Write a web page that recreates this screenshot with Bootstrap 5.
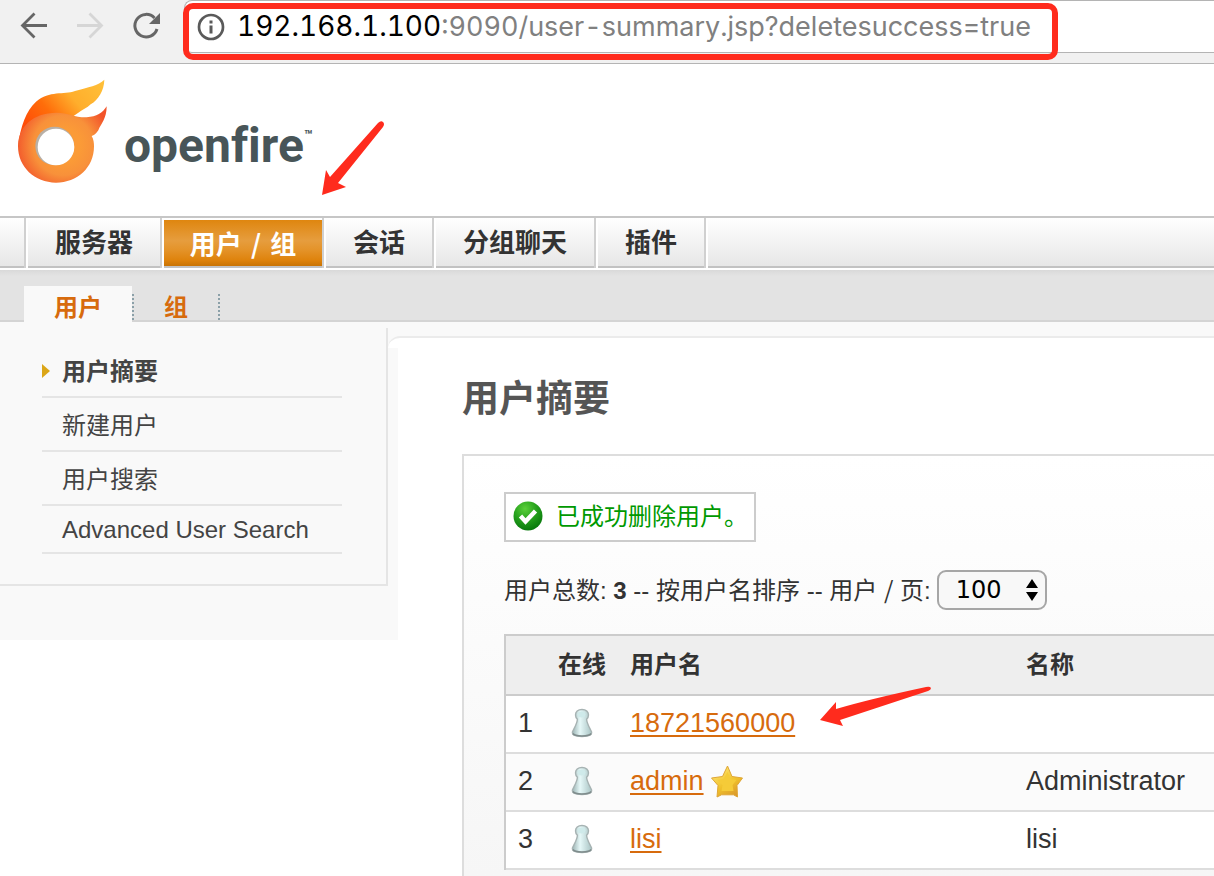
<!DOCTYPE html>
<html lang="zh-CN">
<head>
<meta charset="utf-8">
<meta name="viewport" content="width=device-width, initial-scale=1">
<title>用户摘要 - Openfire</title>
<link href="https://cdn.jsdelivr.net/npm/bootstrap@5.3.0/dist/css/bootstrap.min.css" rel="stylesheet">
<style>
body{font-family:"Liberation Sans","Noto Sans CJK SC",sans-serif;font-size:24px;line-height:36px;color:#333;background:#fff;overflow-x:hidden}
a{color:#d76b0d}
svg{display:block;flex:none}
/* browser toolbar */
.toolbar{height:64px;background:#f1f1f1;border-bottom:1px solid #b4b4b4}
.tool-btn{width:28px;height:28px;margin-right:28px}
.address{height:53px;background:#fff;border:1px solid #b4b4b4;border-right:0;border-radius:8px 0 0 8px;font:27px/36px Inter,sans-serif;font-variant-numeric:tabular-nums;color:#808080;padding-left:12px}
.address b{font-size:28px;font-weight:400;color:#000}
.mark-box{position:absolute;left:183px;top:3px;width:875px;height:57px;border:6px solid #ff2b1d;border-radius:10px;pointer-events:none}
.mark-arrow{position:absolute;fill:#ff2b1d;pointer-events:none}
/* header */
.brand-bar{height:152px;padding:14px 16px}
.brand-name{font:700 48px/56px Roboto,sans-serif;font-variant-ligatures:none;color:#485558;text-decoration:none}
.brand-name sup{font-size:14px;top:-22px}
.main-tabs{height:54px;border-top:2px solid #c6c6c6;border-bottom:2px solid #fff;background:linear-gradient(#fff,#e6e6e6);box-shadow:inset 0 -2px #c2c2c2;padding-left:24px}
.main-tabs a{padding:0 27px;line-height:50px;font-size:26px;font-weight:700;color:#333;text-decoration:none}
.tab-cell{display:flex;border-right:2px solid #fff;box-shadow:inset -2px 0 #d0d0d0;padding-right:2px}
.tab-cell.first-edge{width:4px}
.main-tabs a.current{padding:0;width:158px;text-align:center;color:#fff;line-height:46px;height:46px;margin-top:2px;background:linear-gradient(#df860f,#e69d3e 45%,#e49329 65%,#de820b 88%,#c97405)}
.slash{margin:0 2px;font-family:"Noto Sans CJK SC",sans-serif}
.sub-tabs{height:52px;background:linear-gradient(#d9d9d9,#e3e3e3 6px);border-bottom:2px solid #d4d4d4;padding-left:24px}
.sub-tabs a{font-weight:700;text-decoration:none;line-height:28px;border-right:2px dotted #8ba0a8;height:26px;padding:0 30px}
.sub-tabs a.current{position:relative;background:#f9f9f9;height:36px;line-height:44px;border:0;margin-bottom:-2px}
.sub-tabs .divider{width:2px;height:26px;border-right:2px dotted #8ba0a8}
/* content */
.side-zone{width:388px;height:318px;background:#f9f9f9;padding-top:6px}
.side-panel{height:258px;border:solid #e5e5e5;border-width:0 2px 2px 0;padding:16px 44px 0 42px}
.side-panel a{display:block;position:relative;color:#444;text-decoration:none;padding:10px 0 6px 20px;border-bottom:2px solid #e5e5e5}
.side-panel a:last-child{padding:6px 0 4px 20px}
.side-panel a.current{font-weight:700}
.side-panel a.current::before{content:"";position:absolute;left:0;top:20px;border:solid transparent;border-width:7px 0 7px 8px;border-left-color:#dba617}
.main-zone{min-width:0;background:linear-gradient(#f9f9f9,#f9f9f9) 0 0/100% 26px no-repeat}
.main-sheet{margin-top:14px;border-top:2px solid #ebebeb;border-top-left-radius:12px;padding:34px 0 0 74px;background:linear-gradient(#f9f9f9,#f9f9f9) 0 10px/10px 292px no-repeat #fff}
h1{font-size:37px;line-height:56px;font-weight:700;color:#555;margin:0 0 26px}
.content-box{border:2px solid #ddd;border-width:2px 0 0 2px;background:linear-gradient(#fff,#f6f6f6);padding:36px 0 0 40px}
.notice{border:2px solid #ccc;background:#fff;color:#090;height:50px;width:252px;padding-left:6px;gap:12px;margin-bottom:28px}
.page-size{width:110px;height:40px;border:2px solid #a6a6a6;border-radius:9px;background:#f8f8f8;font:24px/34px "DejaVu Sans",sans-serif;color:#000;padding:0 0 0 17px;appearance:none}
.select-wrap{margin-left:6px}
.select-arrows{position:absolute;right:9px;top:9px;pointer-events:none}
.users{width:100%;margin:24px 0 0;border-left:2px solid #ccc;border-collapse:separate;border-spacing:0;table-layout:fixed}
.users th{height:62px;background:#eee;border:solid #ccc;border-width:2px 0;padding:0}
.users td{height:58px;border-bottom:2px solid #ddd;background:#fff;font-size:27px;padding:0 0 2px;white-space:nowrap}
.users tr:nth-child(even) td{background:#fbfbfb}
.users td:first-child{padding-left:12px}
.users th:nth-child(3),.users td:nth-child(3){padding-left:12px}
.users a{text-underline-offset:3px;text-decoration-thickness:2px}
.name-line{gap:7px}
.c-num{width:40px}.c-on{width:72px}.c-user{width:408px}
.users td:nth-child(2) svg{margin:0 auto}
</style>
</head>
<body class="min-vh-100 d-flex flex-column">
<svg width="0" height="0" class="position-absolute" aria-hidden="true">
<defs>
<linearGradient id="gPawn"><stop offset="0" stop-color="#9cb4b4"/><stop offset=".4" stop-color="#e6f8f8"/><stop offset="1" stop-color="#a9c4c4"/></linearGradient>
<symbol id="pawn" viewBox="0 0 22 30"><path d="M11 1.500c-4.200 0-6.500 2.500-6.500 5.500 0 2 .9 3.300 1.900 4.300C6.200 15.500 3.800 19 1.600 23.500c-1 3.300 1.500 5 9.400 5s10.400-1.700 9.400-5c-2.200-4.500-4.600-8-4.800-12.200 1-1 1.900-2.300 1.900-4.300 0-3-2.300-5.500-6.500-5.500z" fill="url(#gPawn)" stroke="#a7b3b3" stroke-width="1.400"/><path d="M2 25.500c2 3.200 16 3.200 18 0" fill="none" stroke="#7f8c8c" stroke-width="1.500"/><ellipse cx="10.500" cy="6.500" rx="4" ry="3" fill="#cfeaea"/></symbol>
</defs>
</svg>

<div class="toolbar position-relative d-flex flex-none">
  <div class="d-flex pt-2 ps-3 ms-1 mt-1">
    <button class="tool-btn btn p-0 border-0" aria-label="后退"><svg width="28" height="28" fill="none" stroke="#666" stroke-width="2.800"><path d="M27 13.500H3M14.500 1.500l-12 12 12 12"/></svg></button>
    <button class="tool-btn btn p-0 border-0" aria-label="前进"><svg width="28" height="28" fill="none" stroke="#d6d6d6" stroke-width="2.800"><path d="M1 13.500h24M13.500 1.500l12 12-12 12"/></svg></button>
    <button class="tool-btn btn p-0 border-0 me-0" aria-label="刷新"><svg width="28" height="28"><path d="M22.500 6A11.300 11.300 0 1 0 25 17" fill="none" stroke="#666" stroke-width="3"/><path d="M28 1v11H17z" fill="#666"/></svg></button>
  </div>
  <div class="address d-flex flex-fill align-items-center ms-4">
    <svg width="28" height="28" class="me-2 ms-0"><circle cx="14" cy="14" r="12" fill="none" stroke="#5a5a5a" stroke-width="2.700"/><path d="M12.500 12.500h3v8h-3zM12.500 7.500h3v3h-3z" fill="#5a5a5a"/></svg>
    <div class="ms-1" role="textbox" contenteditable="true" aria-label="地址"><b>192.168.1.100</b>:9090/user-summary.jsp?deletesuccess=true</div>
  </div>
  <div class="mark-box"></div>
</div>

<header class="brand-bar position-relative d-flex">
  <svg width="92" height="106" viewBox="48 23 276 318">
    <defs>
      <linearGradient id="gBack" x1="0" y1=".6" x2="1" y2="0"><stop offset="0" stop-color="#ff4c08"/><stop offset=".3" stop-color="#ff6d0a"/><stop offset=".6" stop-color="#ffae2c"/><stop offset="1" stop-color="#ffc13a"/></linearGradient>
      <radialGradient id="gRing" gradientUnits="userSpaceOnUse" cx="190" cy="225" r="145"><stop offset=".35" stop-color="#fb9b37"/><stop offset=".62" stop-color="#f8913a"/><stop offset="1" stop-color="#f2532a"/></radialGradient>
    </defs>
    <path d="M56 215C62 172 78 120 108 94C150 60 190 74 225 62C265 50 295 46 313 28C312 60 296 88 272 102C262 112 245 120 235 127L180 165Z" fill="url(#gBack)"/>
    <path d="M54 228C54 170 98 127 170 127C205 127 225 142 260 141C290 139 308 128 320 108C320 145 304 158 295 180C288 191 282 195 275 197C281 207 282 218 282 228C282 292 232 337 168 337C104 337 54 290 54 228Z" fill="url(#gRing)"/>
    <circle cx="164" cy="227" r="58" fill="#b8b0a7"/><circle cx="168" cy="230" r="55" fill="#fff"/>
  </svg>
  <a class="brand-name ms-3 mt-4 pt-3" href="#">openfire<sup>™</sup></a>
  <svg class="mark-arrow" style="left:322px;top:56px" width="64" height="76"><path d="M0 75L4 50L8 57L56 3Q59 0 61 2Q63 4 61 7L16 63L24 67Z"/></svg>
</header>

<nav class="main-tabs d-flex" aria-label="主导航">
  <div class="tab-cell first-edge"></div>
  <div class="tab-cell"><a href="#">服务器</a></div>
  <div class="tab-cell"><a href="#" class="current">用户 <span class="slash">/</span> 组</a></div>
  <div class="tab-cell"><a href="#">会话</a></div>
  <div class="tab-cell"><a href="#">分组聊天</a></div>
  <div class="tab-cell"><a href="#">插件</a></div>
</nav>
<nav class="sub-tabs d-flex align-items-end" aria-label="子导航">
  <a href="#" class="current">用户</a><span class="divider"></span><a href="#">组</a>
</nav>

<div class="d-flex flex-fill">
  <aside class="side-zone flex-shrink-0">
    <nav class="side-panel" aria-label="用户菜单">
      <a href="#" class="current">用户摘要</a>
      <a href="#">新建用户</a>
      <a href="#">用户搜索</a>
      <a href="#">Advanced User Search</a>
    </nav>
  </aside>
  <main class="main-zone flex-fill d-flex flex-column">
    <div class="main-sheet flex-fill d-flex flex-column">
      <h1>用户摘要</h1>
      <section class="content-box flex-fill">
        <div class="notice d-flex align-items-center" role="status">
          <svg width="32" height="32" viewBox="0 0 32 32"><defs><radialGradient id="gOk" cx=".4" cy=".25" r=".8"><stop offset="0" stop-color="#5bd03a"/><stop offset=".5" stop-color="#25a01c"/><stop offset="1" stop-color="#04740a"/></radialGradient></defs><circle cx="16" cy="15" r="14.500" fill="url(#gOk)"/><path d="M8.500 15l5 5.500L23.500 10" fill="none" stroke="#fff" stroke-width="4.500"/></svg>
          <span>已成功删除用户。</span>
        </div>
        <div class="d-flex align-items-center text-nowrap">
          <label for="pageSize">用户总数: <b>3</b> -- 按用户名排序 -- 用户 <span class="slash mx-0">/</span> 页:</label>
          <div class="select-wrap position-relative">
            <select id="pageSize" class="page-size"><option>100</option></select>
            <svg class="select-arrows" width="12" height="22"><path d="M0 9L6 0l6 9zM0 13h12l-6 9z"/></svg>
          </div>
        </div>
        <table class="users">
          <colgroup><col class="c-num"><col class="c-on"><col class="c-user"><col></colgroup>
          <thead><tr><th></th><th class="text-center">在线</th><th>用户名</th><th>名称</th></tr></thead>
          <tbody>
            <tr><td>1</td><td><svg width="22" height="30"><use href="#pawn"/></svg></td><td class="position-relative"><a href="#">18721560000</a>
              <svg class="mark-arrow" style="left:202px;top:-10px" width="112" height="42"><path d="M0 34L16 16V23Q50 13 106 1Q110 0 111 2Q111 4 108 5L20 34L23 40Z"/></svg></td><td></td></tr>
            <tr><td>2</td><td><svg width="22" height="30"><use href="#pawn"/></svg></td><td><div class="name-line d-flex align-items-center"><a href="#">admin</a><svg width="32" height="33" viewBox="0 0 32 33"><defs><linearGradient id="gStar" x1=".2" y1="0" x2=".8" y2="1"><stop offset="0" stop-color="#ffe877"/><stop offset=".55" stop-color="#f0c22c"/><stop offset="1" stop-color="#d9952a"/></linearGradient></defs><path d="M16.500 1l4.500 10.500 10.500 1.500-5.500 7.500 .5 11.500-4-2.200h-12L6 32l1-11.500L.5 13l11-1.500z" fill="url(#gStar)" stroke="#dfa636"/><path d="M16.500 7l3 7 6 1-4 5 1 6h-12l1-6-5-5 6-1z" fill="#f5cb38"/></svg></div></td><td>Administrator</td></tr>
            <tr><td>3</td><td><svg width="22" height="30"><use href="#pawn"/></svg></td><td><a href="#">lisi</a></td><td>lisi</td></tr>
          </tbody>
        </table>
      </section>
    </div>
  </main>
</div>
<script src="https://cdn.jsdelivr.net/npm/bootstrap@5.3.0/dist/js/bootstrap.bundle.min.js"></script>
</body>
</html>
